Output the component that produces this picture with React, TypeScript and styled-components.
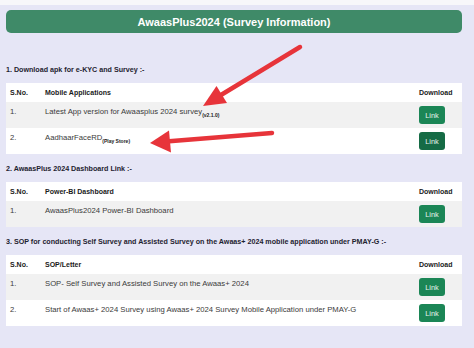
import styled, { createGlobalStyle } from "styled-components";

interface Row {
  title: string;
  tag?: string;
  dark?: boolean;
}

interface Section {
  heading: string;
  column: string;
  rows: Row[];
}

const sections: Section[] = [
  {
    heading: "1. Download apk for e-KYC and Survey :-",
    column: "Mobile Applications",
    rows: [
      { title: "Latest App version for Awaasplus 2024 survey", tag: "(v2.1.0)" },
      { title: "AadhaarFaceRD", tag: "(Play Store)", dark: true },
    ],
  },
  {
    heading: "2. AwaasPlus 2024 Dashboard Link :-",
    column: "Power-BI Dashboard",
    rows: [{ title: "AwaasPlus2024 Power-BI Dashboard" }],
  },
  {
    heading:
      "3. SOP for conducting Self Survey and Assisted Survey on the Awaas+ 2024 mobile application under PMAY-G :-",
    column: "SOP/Letter",
    rows: [
      { title: "SOP- Self Survey and Assisted Survey on the Awaas+ 2024" },
      { title: "Start of Awaas+ 2024 Survey using Awaas+ 2024 Survey Mobile Application under PMAY-G" },
    ],
  },
];

export default function App() {
  return (
    <>
      <GlobalStyle />
      <Page>
        <TopStrip />
        <Content>
          <Banner>AwaasPlus2024 (Survey Information)</Banner>
          {sections.map((section) => (
            <Block key={section.heading}>
              <Heading>{section.heading}</Heading>
              <Table>
                <HeadRow>
                  <HeadCell>S.No.</HeadCell>
                  <HeadCell>{section.column}</HeadCell>
                  <HeadCell $action>Download</HeadCell>
                </HeadRow>
                {section.rows.map((row, i) => (
                  <BodyRow key={row.title} $striped={i % 2 === 0}>
                    <Cell>{i + 1}.</Cell>
                    <Cell>
                      {row.title}
                      {row.tag && <Tag>{row.tag}</Tag>}
                    </Cell>
                    <ActionCell>
                      <LinkButton $dark={row.dark}>Link</LinkButton>
                    </ActionCell>
                  </BodyRow>
                ))}
              </Table>
            </Block>
          ))}
        </Content>
        <Arrows width="474" height="348" viewBox="0 0 474 348">
          <g stroke="#e7343a" strokeWidth="4.5" strokeLinecap="round" fill="#e7343a">
            <line x1="300" y1="47" x2="216" y2="98" />
            <polygon points="203,106 227,103 216.5,86" stroke="none" />
            <line x1="272" y1="133" x2="166" y2="141.5" />
            <polygon points="150,143 171,152.5 169,130.5" stroke="none" />
          </g>
        </Arrows>
      </Page>
    </>
  );
}

// Styles
const GlobalStyle = createGlobalStyle`
  body {
    margin: 0;
    background: #e6e6f6;
    font-family: "Liberation Sans", Arial, sans-serif;
    color: #212529;
  }
`;

const Page = styled.div`
  position: relative;
  width: 474px;
  height: 348px;
  overflow: hidden;
`;

const TopStrip = styled.div`
  height: 5px;
  background: #f7f7fa;
`;

const Content = styled.div`
  width: 456px;
  padding: 5px 0 0 6px;
`;

const Banner = styled.div`
  height: 23px;
  border-radius: 5px;
  background: #3f8a68;
  color: #fff;
  font-weight: bold;
  font-size: 11px;
  display: flex;
  align-items: center;
  justify-content: center;
  margin-bottom: 23px;
`;

const Block = styled.section``;

const Heading = styled.div`
  height: 27px;
  display: flex;
  align-items: center;
  font-size: 7.15px;
  font-weight: bold;
  color: #1e2330;
`;

const Table = styled.div`
  margin-bottom: 1px;
`;

const HeadRow = styled.div`
  display: grid;
  grid-template-columns: 35px 1fr 43px;
  height: 19px;
  align-items: center;
  background: #fff;
  font-weight: bold;
  font-size: 7px;
  color: #1a1a1a;
`;

const HeadCell = styled.div<{ $action?: boolean }>`
  padding-left: ${(p) => (p.$action ? "0" : "4px")};
  white-space: nowrap;
`;

const BodyRow = styled.div<{ $striped: boolean }>`
  display: grid;
  grid-template-columns: 35px 1fr 43px;
  height: 26px;
  align-items: start;
  background: ${(p) => (p.$striped ? "#f1f1f1" : "#fff")};
  font-size: 7.7px;
  color: #3b3b3b;
`;

const Cell = styled.div`
  padding: 5px 0 0 4px;
  white-space: nowrap;
`;

const ActionCell = styled.div`
  align-self: center;
`;

const Tag = styled.sub`
  font-size: 5px;
  font-weight: bold;
  color: #222;
`;

const LinkButton = styled.span<{ $dark?: boolean }>`
  display: flex;
  align-items: center;
  justify-content: center;
  width: 26px;
  height: 18px;
  border-radius: 3px;
  background: ${(p) => (p.$dark ? "#156b45" : "#1b8656")};
  color: #e8f3ec;
  font-size: 7.4px;
`;

const Arrows = styled.svg`
  position: absolute;
  left: 0;
  top: 0;
  pointer-events: none;
`;
